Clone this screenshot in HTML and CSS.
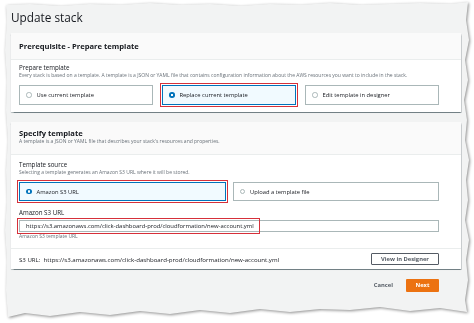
FILE: index.html
```html
<!DOCTYPE html>
<html lang="en">
<head>
<meta charset="utf-8">
<title>Update stack</title>
<link rel="stylesheet" href="styles.css">
</head>
<body>
<div class="sheet">
  <div class="paper">
    <h1 class="title">Update stack</h1>

    <section class="card card-1">
      <header class="card-head head-1">
        <h2>Prerequisite - Prepare template</h2>
      </header>
      <div class="card-body body-1">
        <div class="label">Prepare template</div>
        <div class="desc">Every stack is based on a template. A template is a JSON or YAML file that contains configuration information about the AWS resources you want to include in the stack.</div>
        <div class="tiles three">
          <div class="tile"><span class="radio"></span>Use current template</div>
          <div class="tile selected marked"><span class="radio on"></span>Replace current template</div>
          <div class="tile"><span class="radio"></span>Edit template in designer</div>
        </div>
      </div>
    </section>

    <section class="card card-2">
      <header class="card-head head-2">
        <h2>Specify template</h2>
        <div class="desc">A template is a JSON or YAML file that describes your stack's resources and properties.</div>
      </header>
      <div class="card-body body-2">
        <div class="label">Template source</div>
        <div class="desc">Selecting a template generates an Amazon S3 URL where it will be stored.</div>
        <div class="tiles two">
          <div class="tile selected marked"><span class="radio on"></span>Amazon S3 URL</div>
          <div class="tile"><span class="radio"></span>Upload a template file</div>
        </div>
        <div class="label url-label">Amazon S3 URL</div>
        <div class="input-wrap">
          <div class="input">https://s3.amazonaws.com/click-dashboard-prod/cloudformation/new-account.yml</div>
          <span class="mark-box"></span>
        </div>
        <div class="desc hint">Amazon S3 template URL</div>
      </div>
      <div class="card-foot">
        <span class="s3-url">S3 URL:&nbsp; https://s3.amazonaws.com/click-dashboard-prod/cloudformation/new-account.yml</span>
        <button class="btn-normal">View in Designer</button>
      </div>
    </section>

    <div class="actions">
      <button class="btn-link">Cancel</button>
      <button class="btn-primary">Next</button>
    </div>
  </div>
</div>
</body>
</html>
```

FILE: styles.css
```css
* { box-sizing: border-box; }

html, body {
  margin: 0;
  padding: 0;
  background: #ffffff;
}

body {
  font-family: "Open Sans", "Liberation Sans", sans-serif;
  color: #16191f;
}

.sheet {
  width: 474px;
  height: 323px;
  filter: drop-shadow(1px 1px 1.5px rgba(0, 0, 0, 0.45));
}

.paper {
  width: 474px;
  height: 323px;
  background: #f2f3f3;
  padding: 9px 13px 0 11px;
  clip-path: polygon(
    6px 5px, 30px 4px, 60px 6px, 90px 4px, 120px 5px, 150px 3px, 180px 5px, 210px 4px,
    240px 6px, 270px 4px, 300px 5px, 330px 3px, 360px 5px, 390px 4px, 420px 3px, 450px 4px, 468px 2px,
    466px 20px, 469px 40px, 465px 60px, 468px 80px, 464px 100px, 467px 120px, 465px 140px,
    469px 160px, 466px 180px, 468px 200px, 465px 220px, 469px 240px, 466px 260px, 468px 280px,
    465px 300px, 467px 312px,
    440px 308px, 410px 311px, 380px 307px, 350px 310px, 320px 309px, 290px 312px, 260px 309px,
    230px 313px, 200px 310px, 170px 314px, 140px 311px, 110px 315px, 80px 312px, 50px 316px,
    25px 313px, 8px 317px,
    6px 290px, 7px 260px, 5px 230px, 7px 200px, 6px 170px, 8px 140px, 6px 110px, 7px 80px,
    5px 50px, 7px 20px
  );
}

.title {
  margin: 0 0 8px 0;
  font-size: 11.8px;
  line-height: 16px;
  font-weight: 400;
  color: #16191f;
}

.card {
  background: #ffffff;
  box-shadow: 0 0.6px 1px rgba(0, 28, 36, 0.35), 0.5px 0.5px 1px rgba(0, 28, 36, 0.15), -0.5px 0.5px 1px rgba(0, 28, 36, 0.15);
}

.card-2 { margin-top: 10px; }

.card-head {
  background: #fafafa;
  border-bottom: 1px solid #eaeded;
  padding: 0 22px 0 8px;
}

.card-head h2 {
  margin: 0;
  font-size: 7.6px;
  line-height: 10px;
  font-weight: 700;
  color: #16191f;
}

.head-1 { padding-top: 8px; padding-bottom: 8px; }
.head-2 { padding-top: 6px; padding-bottom: 9.5px; }

.card-body { padding: 0 22px 0 8px; }
.body-1 { padding-top: 4px; padding-bottom: 7px; }
.body-2 { padding-top: 6px; padding-bottom: 8.5px; }

.label {
  font-size: 6.2px;
  line-height: 8px;
  color: #16191f;
}

.desc {
  font-size: 5px;
  line-height: 6.5px;
  color: #687078;
  white-space: nowrap;
}

.tiles {
  display: grid;
  margin-top: 6.5px;
}

.tiles.three { grid-template-columns: 1fr 1fr 1fr; column-gap: 9px; }
.tiles.two { grid-template-columns: 1fr 1fr; column-gap: 7px; }

.tile {
  display: flex;
  align-items: center;
  gap: 5px;
  height: 20px;
  padding-left: 6px;
  border: 1px solid #aab7b8;
  background: #ffffff;
  font-size: 5.8px;
  color: #16191f;
  white-space: nowrap;
}

.body-2 .tile { height: 19px; }

.tile.selected {
  border-color: #0073bb;
  background: #f1faff;
}

.marked {
  outline: 1.5px solid #d6303a;
  outline-offset: 1px;
}

.radio {
  width: 5.5px;
  height: 5.5px;
  border-radius: 50%;
  border: 0.8px solid #aab7b8;
  background: #ffffff;
  flex: none;
}

.radio.on {
  border: 0;
  background: radial-gradient(circle, #ffffff 0 1px, #0073bb 1.4px);
}

.url-label { margin-top: 8px; }

.input-wrap {
  position: relative;
  margin-top: 3px;
}

.input {
  height: 12px;
  border: 1px solid #aab7b8;
  padding-left: 6px;
  font-size: 5.9px;
  line-height: 10px;
  color: #16191f;
  white-space: nowrap;
}

.mark-box {
  position: absolute;
  left: -2px;
  top: -2px;
  width: 243px;
  height: 16px;
  border: 1.5px solid #d6303a;
  pointer-events: none;
}

.hint { margin-top: 1px; }

.card-foot {
  display: flex;
  align-items: center;
  justify-content: space-between;
  border-top: 1px solid #eaeded;
  padding: 4px 22px 4px 8px;
}

.s3-url {
  font-size: 6.1px;
  color: #16191f;
  white-space: nowrap;
}

button {
  font-family: inherit;
  margin: 0;
  cursor: pointer;
}

.btn-normal {
  height: 12px;
  width: 68px;
  padding: 0;
  border: 1px solid #545b64;
  border-radius: 1px;
  background: #ffffff;
  color: #545b64;
  font-size: 5.8px;
  font-weight: 700;
  line-height: 10px;
}

.actions {
  display: flex;
  justify-content: flex-end;
  align-items: center;
  gap: 13px;
  margin-top: 10px;
  padding-right: 22px;
}

.btn-link {
  border: 0;
  background: transparent;
  padding: 0;
  color: #545b64;
  font-size: 5.8px;
  font-weight: 700;
  line-height: 12px;
}

.btn-primary {
  width: 33px;
  height: 12.5px;
  border: 0;
  border-radius: 1px;
  padding: 0;
  background: #ec7211;
  color: #ffffff;
  font-size: 5.8px;
  font-weight: 700;
  line-height: 12.5px;
}
```
